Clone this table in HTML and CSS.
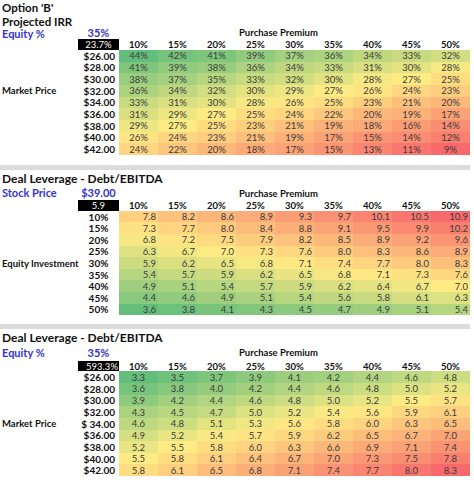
FILE: index.html
```html
<!DOCTYPE html>
<html>
<head>
<meta charset="utf-8">
<link rel="stylesheet" href="styles.css">
</head>
<body>
<div class="sheet">
  <section class="sec s1 scale-high">
    <div class="title t1">Option 'B'</div>
    <div class="title t2">Projected IRR</div>
    <div class="lbl blue">Equity %</div><div class="val blue">35%</div><div class="pp">Purchase Premium</div>
    <div class="corner">23.7%</div><div class="h">10%</div><div class="h">15%</div><div class="h">20%</div><div class="h">25%</div><div class="h">30%</div><div class="h">35%</div><div class="h">40%</div><div class="h">45%</div><div class="h">50%</div>
    <div></div><div class="rl">$26.00</div><div class="c">44%</div><div class="c">42%</div><div class="c">41%</div><div class="c">39%</div><div class="c">37%</div><div class="c">36%</div><div class="c">34%</div><div class="c">33%</div><div class="c">32%</div>
    <div></div><div class="rl">$28.00</div><div class="c">41%</div><div class="c">39%</div><div class="c">38%</div><div class="c">36%</div><div class="c">34%</div><div class="c">33%</div><div class="c">31%</div><div class="c">30%</div><div class="c">28%</div>
    <div></div><div class="rl">$30.00</div><div class="c">38%</div><div class="c">37%</div><div class="c">35%</div><div class="c">33%</div><div class="c">32%</div><div class="c">30%</div><div class="c">28%</div><div class="c">27%</div><div class="c">25%</div>
    <div class="side">Market Price</div><div class="rl">$32.00</div><div class="c">36%</div><div class="c">34%</div><div class="c">32%</div><div class="c">30%</div><div class="c">29%</div><div class="c">27%</div><div class="c">26%</div><div class="c">24%</div><div class="c">23%</div>
    <div></div><div class="rl">$34.00</div><div class="c">33%</div><div class="c">31%</div><div class="c">30%</div><div class="c">28%</div><div class="c">26%</div><div class="c">25%</div><div class="c">23%</div><div class="c">21%</div><div class="c">20%</div>
    <div></div><div class="rl">$36.00</div><div class="c">31%</div><div class="c">29%</div><div class="c">27%</div><div class="c">25%</div><div class="c">24%</div><div class="c">22%</div><div class="c">20%</div><div class="c">19%</div><div class="c">17%</div>
    <div></div><div class="rl">$38.00</div><div class="c">29%</div><div class="c">27%</div><div class="c">25%</div><div class="c">23%</div><div class="c">21%</div><div class="c">19%</div><div class="c">18%</div><div class="c">16%</div><div class="c">14%</div>
    <div></div><div class="rl">$40.00</div><div class="c">26%</div><div class="c">24%</div><div class="c">23%</div><div class="c">21%</div><div class="c">19%</div><div class="c">17%</div><div class="c">15%</div><div class="c">14%</div><div class="c">12%</div>
    <div></div><div class="rl">$42.00</div><div class="c">24%</div><div class="c">22%</div><div class="c">20%</div><div class="c">18%</div><div class="c">17%</div><div class="c">15%</div><div class="c">13%</div><div class="c">11%</div><div class="c">9%</div>
  </section>

  <div class="bar b1"></div>

  <section class="sec s2 scale-low right">
    <div class="title">Deal Leverage - Debt/EBITDA</div>
    <div class="lbl blue">Stock Price</div><div class="val blue">$39.00</div><div class="pp">Purchase Premium</div>
    <div></div><div class="corner">5.9</div><div class="h">10%</div><div class="h">15%</div><div class="h">20%</div><div class="h">25%</div><div class="h">30%</div><div class="h">35%</div><div class="h">40%</div><div class="h">45%</div><div class="h">50%</div>
    <div></div><div class="rl ctr">10%</div><div class="c">7.8</div><div class="c">8.2</div><div class="c">8.6</div><div class="c">8.9</div><div class="c">9.3</div><div class="c">9.7</div><div class="c">10.1</div><div class="c">10.5</div><div class="c">10.9</div>
    <div></div><div class="rl ctr">15%</div><div class="c">7.3</div><div class="c">7.7</div><div class="c">8.0</div><div class="c">8.4</div><div class="c">8.8</div><div class="c">9.1</div><div class="c">9.5</div><div class="c">9.9</div><div class="c">10.2</div>
    <div></div><div class="rl ctr">20%</div><div class="c">6.8</div><div class="c">7.2</div><div class="c">7.5</div><div class="c">7.9</div><div class="c">8.2</div><div class="c">8.5</div><div class="c">8.9</div><div class="c">9.2</div><div class="c">9.6</div>
    <div></div><div class="rl ctr">25%</div><div class="c">6.3</div><div class="c">6.7</div><div class="c">7.0</div><div class="c">7.3</div><div class="c">7.6</div><div class="c">8.0</div><div class="c">8.3</div><div class="c">8.6</div><div class="c">8.9</div>
    <div class="side">Equity Investment</div><div class="rl ctr">30%</div><div class="c">5.9</div><div class="c">6.2</div><div class="c">6.5</div><div class="c">6.8</div><div class="c">7.1</div><div class="c">7.4</div><div class="c">7.7</div><div class="c">8.0</div><div class="c">8.3</div>
    <div></div><div class="rl ctr">35%</div><div class="c">5.4</div><div class="c">5.7</div><div class="c">5.9</div><div class="c">6.2</div><div class="c">6.5</div><div class="c">6.8</div><div class="c">7.1</div><div class="c">7.3</div><div class="c">7.6</div>
    <div></div><div class="rl ctr">40%</div><div class="c">4.9</div><div class="c">5.1</div><div class="c">5.4</div><div class="c">5.7</div><div class="c">5.9</div><div class="c">6.2</div><div class="c">6.4</div><div class="c">6.7</div><div class="c">7.0</div>
    <div></div><div class="rl ctr">45%</div><div class="c">4.4</div><div class="c">4.6</div><div class="c">4.9</div><div class="c">5.1</div><div class="c">5.4</div><div class="c">5.6</div><div class="c">5.8</div><div class="c">6.1</div><div class="c">6.3</div>
    <div></div><div class="rl ctr">50%</div><div class="c">3.6</div><div class="c">3.8</div><div class="c">4.1</div><div class="c">4.3</div><div class="c">4.5</div><div class="c">4.7</div><div class="c">4.9</div><div class="c">5.1</div><div class="c">5.4</div>
  </section>

  <div class="bar b2"></div>

  <section class="sec s3 scale-low">
    <div class="title">Deal Leverage - Debt/EBITDA</div>
    <div class="lbl blue">Equity %</div><div class="val blue">35%</div><div class="pp">Purchase Premium</div>
    <div></div><div class="corner rt">593.3%</div><div class="h">10%</div><div class="h">15%</div><div class="h">20%</div><div class="h">25%</div><div class="h">30%</div><div class="h">35%</div><div class="h">40%</div><div class="h">45%</div><div class="h">50%</div>
    <div></div><div class="rl">$26.00</div><div class="c">3.3</div><div class="c">3.5</div><div class="c">3.7</div><div class="c">3.9</div><div class="c">4.1</div><div class="c">4.2</div><div class="c">4.4</div><div class="c">4.6</div><div class="c">4.8</div>
    <div></div><div class="rl">$28.00</div><div class="c">3.6</div><div class="c">3.8</div><div class="c">4.0</div><div class="c">4.2</div><div class="c">4.4</div><div class="c">4.6</div><div class="c">4.8</div><div class="c">5.0</div><div class="c">5.2</div>
    <div></div><div class="rl">$30.00</div><div class="c">3.9</div><div class="c">4.2</div><div class="c">4.4</div><div class="c">4.6</div><div class="c">4.8</div><div class="c">5.0</div><div class="c">5.2</div><div class="c">5.5</div><div class="c">5.7</div>
    <div></div><div class="rl">$32.00</div><div class="c">4.3</div><div class="c">4.5</div><div class="c">4.7</div><div class="c">5.0</div><div class="c">5.2</div><div class="c">5.4</div><div class="c">5.6</div><div class="c">5.9</div><div class="c">6.1</div>
    <div class="side">Market Price</div><div class="rl">$ 34.00</div><div class="c">4.6</div><div class="c">4.8</div><div class="c">5.1</div><div class="c">5.3</div><div class="c">5.6</div><div class="c">5.8</div><div class="c">6.0</div><div class="c">6.3</div><div class="c">6.5</div>
    <div></div><div class="rl">$36.00</div><div class="c">4.9</div><div class="c">5.2</div><div class="c">5.4</div><div class="c">5.7</div><div class="c">5.9</div><div class="c">6.2</div><div class="c">6.5</div><div class="c">6.7</div><div class="c">7.0</div>
    <div></div><div class="rl">$38.00</div><div class="c">5.2</div><div class="c">5.5</div><div class="c">5.8</div><div class="c">6.0</div><div class="c">6.3</div><div class="c">6.6</div><div class="c">6.9</div><div class="c">7.1</div><div class="c">7.4</div>
    <div></div><div class="rl">$40.00</div><div class="c">5.5</div><div class="c">5.8</div><div class="c">6.1</div><div class="c">6.4</div><div class="c">6.7</div><div class="c">7.0</div><div class="c">7.3</div><div class="c">7.5</div><div class="c">7.8</div>
    <div></div><div class="rl">$42.00</div><div class="c">5.8</div><div class="c">6.1</div><div class="c">6.5</div><div class="c">6.8</div><div class="c">7.1</div><div class="c">7.4</div><div class="c">7.7</div><div class="c">8.0</div><div class="c">8.3</div>
  </section>
</div>
<script src="script.js"></script>
</body>
</html>
```

FILE: styles.css
```css
html, body {
  margin: 0;
  padding: 0;
  background: #ffffff;
}
.sheet {
  font-family: Lato, "Liberation Sans", sans-serif;
  color: #111111;
  width: 474px;
}
.sec {
  display: grid;
  grid-template-columns: 78px 41px repeat(9, 39px);
  align-items: stretch;
}
.s1 {
  grid-template-rows: 13.8px 13.85px 11.35px 11px repeat(9, 11.67px);
}
.s2 {
  grid-template-rows: 16px 14px 11px repeat(9, 11.6px);
}
.s3 {
  grid-template-rows: 16px 16px 10px repeat(9, 11.67px);
}
.sec > div {
  white-space: nowrap;
  overflow: visible;
  display: flex;
  align-items: center;
}
.title,
.lbl,
.val,
.pp {
  line-height: normal;
  align-items: flex-end !important;
}
.title {
  grid-column: 1 / -1;
  font-size: 12px;
  font-weight: 700;
  padding-left: 2px;
}
.s1 .title {
  font-size: 11.5px;
}
.lbl {
  font-size: 11px;
  font-weight: 700;
  padding-left: 2px;
}
.val {
  font-size: 11px;
  font-weight: 700;
  justify-content: center;
}
.pp {
  grid-column: 6 / -1;
  font-size: 9.5px;
  font-weight: 700;
  padding-left: 3px;
}
.s1 .lbl {
  grid-row: span 2;
  padding-bottom: 9.8px;
}
.s1 .val {
  padding-bottom: 0.2px;
}
.s1 .pp {
  padding-bottom: 0.5px;
}
.s2 .lbl,
.s2 .val {
  padding-bottom: 0.8px;
}
.s2 .pp {
  padding-bottom: 1.3px;
}
.s3 .lbl,
.s3 .val {
  padding-bottom: 2.4px;
}
.s3 .pp {
  padding-bottom: 3.3px;
}
.blue {
  color: #3434cf;
}
.corner {
  background: #000000;
  color: #ffffff;
  font-size: 9.5px;
  justify-content: center;
}
.corner.rt {
  justify-content: flex-end;
  padding-right: 1px;
}
.h {
  font-size: 9.5px;
  font-weight: 700;
  justify-content: center;
}
.rl {
  font-size: 10px;
  font-weight: 700;
  justify-content: flex-end;
  padding-right: 4px;
}
.rl.ctr {
  justify-content: center;
  padding-right: 0;
}
.side {
  font-size: 9.5px;
  font-weight: 700;
  padding-left: 2px;
}
.c {
  font-size: 9.5px;
  color: #3b3b3b;
  justify-content: center;
}
.right .c {
  justify-content: flex-end;
  padding-right: 2px;
}
.bar {
  width: 470px;
  height: 5px;
  background: #dcdcdc;
}
.b1 {
  margin-top: 10px;
}
.b2 {
  margin-top: 9px;
}
```

FILE: script.js
```js
(function () {
  var GREEN = [99, 190, 123], YELLOW = [255, 235, 132], RED = [248, 105, 107];
  function mix(a, b, t) {
    return [0, 1, 2].map(function (i) { return Math.round(a[i] + (b[i] - a[i]) * t); });
  }
  function percentile(sorted, p) {
    var idx = (sorted.length - 1) * p, lo = Math.floor(idx), hi = Math.ceil(idx);
    return sorted[lo] + (sorted[hi] - sorted[lo]) * (idx - lo);
  }
  document.querySelectorAll('.sec').forEach(function (sec) {
    var cells = Array.prototype.slice.call(sec.querySelectorAll('.c'));
    var vals = cells.map(function (c) { return parseFloat(c.textContent); });
    var s = vals.slice().sort(function (a, b) { return a - b; });
    var min = s[0], max = s[s.length - 1], mid = percentile(s, 0.5);
    var highGreen = sec.classList.contains('scale-high');
    cells.forEach(function (c, i) {
      var v = vals[i], col;
      var lowC = highGreen ? RED : GREEN, highC = highGreen ? GREEN : RED;
      if (v <= mid) col = mix(lowC, YELLOW, (v - min) / (mid - min || 1));
      else col = mix(YELLOW, highC, (v - mid) / (max - mid || 1));
      c.style.backgroundColor = 'rgb(' + col.join(',') + ')';
    });
  });
})();
```
